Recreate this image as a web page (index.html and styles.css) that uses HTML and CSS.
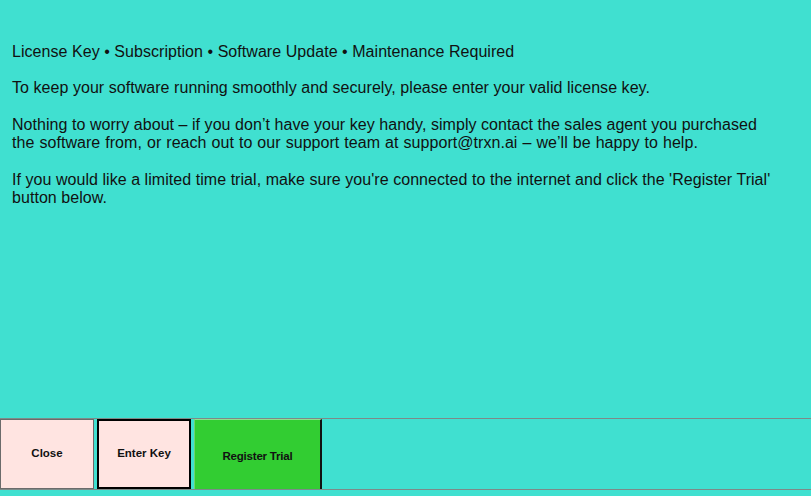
FILE: index.html
```html
<!DOCTYPE html>
<html>
<head>
<meta charset="utf-8">
<link rel="stylesheet" href="styles.css">
</head>
<body>
<div class="window">
  <div class="message">
    <p>License Key • Subscription • Software Update • Maintenance Required</p>
    <p>To keep your software running smoothly and securely, please enter your valid license key.</p>
    <p>Nothing to worry about – if you don’t have your key handy, simply contact the sales agent you purchased<br><span class="wide">the software from, or reach out to our support team at support@trxn.ai – we’ll be happy to help.</span></p>
    <p>If you would like a limited time trial, make sure you're connected to the internet and click the 'Register Trial'<br>button below.</p>
  </div>
  <div class="bar">
    <button class="btn btn-close">Close</button>
    <button class="btn btn-key">Enter Key</button>
    <button class="btn btn-trial">Register Trial</button>
  </div>
</div>
</body>
</html>
```
FILE: styles.css
```css
html, body {
  margin: 0;
  padding: 0;
  background: #40e0d0;
}
.window {
  width: 811px;
  height: 496px;
  display: flex;
  flex-direction: column;
  font-family: "Liberation Sans", Arial, sans-serif;
  color: #111;
}
.message {
  flex: 1;
  padding: 43px 0 0 12px;
  font-size: 16px;
  line-height: 18.4px;
  letter-spacing: 0.05px;
}
.message p {
  margin: 0 0 18px 0;
}
.wide {
  word-spacing: 0.5px;
}
.bar {
  height: 70px;
  border-top: 1px solid #7d8a88;
  border-bottom: 1px solid #7d8a88;
  margin-bottom: 6px;
  display: flex;
  gap: 3px;
}
.btn {
  margin: 0;
  padding: 0 0 3px 0;
  height: 70px;
  font-family: "Liberation Sans", Arial, sans-serif;
  font-weight: bold;
  font-size: 11.5px;
  color: #111;
  box-sizing: border-box;
  cursor: default;
}
.btn-close {
  width: 94px;
  background: #ffe4e1;
  border: 1px solid #6b6b6b;
}
.btn-key {
  width: 94px;
  background: #ffe4e1;
  border: 2px solid #000;
}
.btn-trial {
  width: 128px;
  background: #32cd32;
  border: none;
  border-top: 1px solid #8fe08f;
  border-left: 1px solid #6fd66f;
  border-right: 2px solid #111;
  padding: 3px 0 0 0;
  letter-spacing: -0.2px;
}
```
